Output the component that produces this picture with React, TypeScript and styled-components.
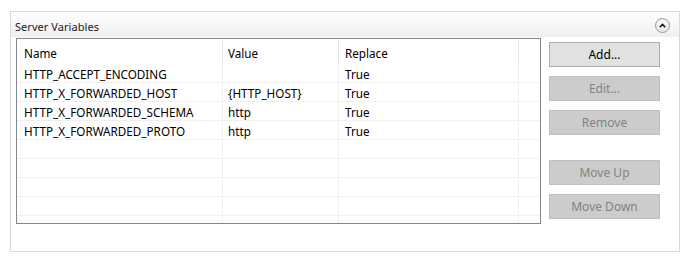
import React from "react";
import styled, { createGlobalStyle } from "styled-components";

const Global = createGlobalStyle`
  html, body { margin: 0; padding: 0; background: #ffffff; }
  body { font-family: "Segoe UI", "Noto Sans", "Open Sans", sans-serif; font-size: 11.7px; color: #000; }
  * { box-sizing: border-box; }
`;

const Page = styled.div`
  padding: 11px 0 0 10px;
`;

const Panel = styled.section`
  width: 670px;
  height: 241px;
  border: 1px solid #dadada;
  background: #ffffff;
  display: flex;
  flex-direction: column;
`;

const Header = styled.header`
  height: 25px;
  flex: none;
  display: flex;
  align-items: center;
  justify-content: space-between;
  padding: 0 9px 0 4px;
  background: linear-gradient(#ffffff, #efefef);
`;

const Title = styled.span`
  font-size: 11px;
  letter-spacing: 0.05px;
  color: #1a1a1a;
  padding-top: 3px;
`;

const CollapseButton = styled.button`
  width: 15px;
  height: 15px;
  padding: 0;
  border-radius: 50%;
  border: 1px solid #9a9a9a;
  background: radial-gradient(circle at 50% 35%, #ffffff, #e2e2e2);
  display: flex;
  align-items: center;
  justify-content: center;
  margin-top: 1px;
`;

const Body = styled.div`
  display: flex;
  gap: 8px;
  padding: 1px 0 0 5px;
`;

const List = styled.div`
  width: 525px;
  height: 186px;
  border: 1px solid #828790;
  background: #fff;
  display: flex;
  flex-direction: column;
  overflow: hidden;
`;

const HeadRow = styled.div`
  height: 25px;
  display: flex;
  flex: none;
`;

const HeadCell = styled.div<{ $w: number; $pad: number }>`
  width: ${(p) => p.$w}px;
  flex: none;
  display: flex;
  align-items: center;
  padding: 2px 0 0 ${(p) => p.$pad}px;
  position: relative;
  &::after {
    content: "";
    position: absolute;
    right: 0;
    top: 1px;
    bottom: 0;
    width: 1px;
    background: #e5e5e5;
  }
`;

const Row = styled.div<{ $fill?: boolean }>`
  height: ${(p) => (p.$fill ? "auto" : "19px")};
  flex: ${(p) => (p.$fill ? "1" : "none")};
  display: flex;
  border-bottom: ${(p) => (p.$fill ? "none" : "1px solid #f0f0f0")};
`;

const Cell = styled.div<{ $w: number; $pad: number }>`
  width: ${(p) => p.$w}px;
  flex: none;
  display: flex;
  align-items: center;
  padding: 1px 0 0 ${(p) => p.$pad}px;
  border-right: 1px solid #f0f0f0;
  white-space: nowrap;
`;

const Buttons = styled.div`
  display: flex;
  flex-direction: column;
  padding-top: 4px;
`;

const Btn = styled.button<{ $gap: number }>`
  width: 111px;
  height: 25px;
  margin-top: ${(p) => p.$gap}px;
  font-family: inherit;
  font-size: 12px;
  padding: 0 0 1px;
  border: 1px solid #adadad;
  background: #e1e1e1;
  color: #000;
  &:disabled {
    border-color: #bfbfbf;
    background: #cccccc;
    color: #838383;
  }
`;

const cols = [206, 116, 180];
const pads = [7, 5, 6];

const rows: [string, string, string][] = [
  ["HTTP_ACCEPT_ENCODING", "", "True"],
  ["HTTP_X_FORWARDED_HOST", "{HTTP_HOST}", "True"],
  ["HTTP_X_FORWARDED_SCHEMA", "http", "True"],
  ["HTTP_X_FORWARDED_PROTO", "http", "True"],
  ["", "", ""],
  ["", "", ""],
  ["", "", ""],
  ["", "", ""],
];

const headers = ["Name", "Value", "Replace"];

export default function App() {
  return (
    <>
      <Global />
      <Page>
        <Panel>
          <Header>
            <Title>Server Variables</Title>
            <CollapseButton aria-label="Collapse">
              <svg width="7" height="5" viewBox="0 0 7 5">
                <path d="M0.8 4.2 L3.5 1.4 L6.2 4.2" fill="none" stroke="#111" strokeWidth="1.6" />
              </svg>
            </CollapseButton>
          </Header>
          <Body>
            <List>
              <HeadRow>
                {headers.map((h, i) => (
                  <HeadCell key={h} $w={cols[i]} $pad={pads[i]}>
                    {h}
                  </HeadCell>
                ))}
              </HeadRow>
              {rows.map((r, i) => (
                <Row key={i}>
                  {r.map((c, j) => (
                    <Cell key={j} $w={cols[j]} $pad={pads[j]}>
                      {c}
                    </Cell>
                  ))}
                </Row>
              ))}
              <Row $fill>
                {cols.map((w, j) => (
                  <Cell key={j} $w={w} $pad={pads[j]} />
                ))}
              </Row>
            </List>
            <Buttons>
              <Btn $gap={0}>Add...</Btn>
              <Btn $gap={9} disabled>Edit...</Btn>
              <Btn $gap={9} disabled>Remove</Btn>
              <Btn $gap={25} disabled>Move Up</Btn>
              <Btn $gap={9} disabled>Move Down</Btn>
            </Buttons>
          </Body>
        </Panel>
      </Page>
    </>
  );
}
